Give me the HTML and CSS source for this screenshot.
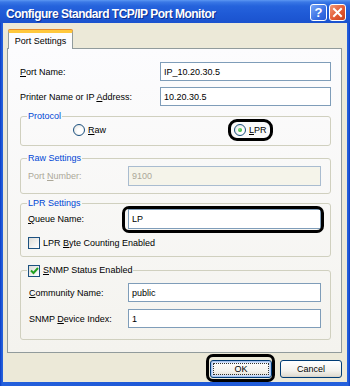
FILE: index.html
```html
<!DOCTYPE html>
<html>
<head>
<meta charset="utf-8">
<link rel="stylesheet" href="styles.css">
</head>
<body>
<div class="window">
  <div class="titlebar">
    <span class="title">Configure Standard TCP/IP Port Monitor</span>
    <div class="tb-buttons">
      <span class="tbtn help">?</span>
      <span class="tbtn close"><svg width="11" height="11" viewBox="0 0 11 11"><path d="M2 2 L9 9 M9 2 L2 9" stroke="#fff" stroke-width="2" stroke-linecap="square"/></svg></span>
    </div>
  </div>
  <div class="client">
    <div class="tabs"><div class="tab">Port Settings</div></div>
    <div class="panel">
      <div class="row"><span class="lbl lbl-top"><u>P</u>ort Name:</span><span class="input wide">IP_10.20.30.5</span></div>
      <div class="row row2"><span class="lbl lbl-top">Printer Name or IP <u>A</u>ddress:</span><span class="input wide">10.20.30.5</span></div>

      <fieldset class="group g-protocol">
        <legend>Protocol</legend>
        <div class="radios">
          <span class="radio raw"><span class="rb"></span><span><u>R</u>aw</span></span>
          <span class="radio lpr mark"><span class="rb on"></span><span><u>L</u>PR</span></span>
        </div>
      </fieldset>

      <fieldset class="group g-raw">
        <legend>Raw Settings</legend>
        <div class="frow first-raw"><span class="lbl disabled">Port <u>N</u>umber:</span><span class="input field dis">9100</span></div>
      </fieldset>

      <fieldset class="group g-lpr">
        <legend>LPR Settings</legend>
        <div class="frow"><span class="lbl"><u>Q</u>ueue Name:</span><span class="input field mark-q">LP</span></div>
        <div class="frow chkrow"><span class="cb"></span><span>LPR <u>B</u>yte Counting Enabled</span></div>
      </fieldset>

      <fieldset class="group g-snmp">
        <legend class="cb-legend"><span class="cb checked"><svg width="9" height="9" viewBox="0 0 9 9"><path d="M1 4.5 L3.5 7 L8 2" fill="none" stroke="#21A121" stroke-width="2"/></svg></span><span><u>S</u>NMP Status Enabled</span></legend>
        <div class="frow srow s1"><span class="lbl lbl-s"><u>C</u>ommunity Name:</span><span class="input field">public</span></div>
        <div class="frow srow s2"><span class="lbl lbl-s">SNMP <u>D</u>evice Index:</span><span class="input field">1</span></div>
      </fieldset>
    </div>
    <div class="buttons">
      <span class="btn default mark-ok"><span class="focus">OK</span></span>
      <span class="btn">Cancel</span>
    </div>
  </div>
</div>
</body>
</html>
```

FILE: styles.css
```css
* { box-sizing: border-box; }
html, body { margin: 0; padding: 0; }
body {
  width: 350px;
  height: 386px;
  overflow: hidden;
  font-family: "Liberation Sans", Arial, sans-serif;
  font-size: 9px;
  color: #000;
  background: #1A4FD0;
}
u { text-decoration: underline; text-underline-offset: 1px; }

.window {
  width: 350px;
  height: 386px;
  display: flex;
  flex-direction: column;
  background: linear-gradient(90deg, #0B3CC4 0, #2460DC 2px, #1E58D6 50%, #2460DC calc(100% - 2px), #0B3CC4 100%);
}
.titlebar {
  height: 23px;
  flex: none;
  display: flex;
  justify-content: space-between;
  align-items: flex-start;
  padding: 0 4px 0 6px;
  background: linear-gradient(#5C97F2 0, #3A78E6 2px, #2563DC 6px, #1F5AD6 60%, #1A52CE 100%);
}
.title {
  margin-top: 8px;
  color: #fff;
  font-weight: bold;
  font-size: 12px;
  line-height: 12px;
  letter-spacing: -0.5px;
  text-shadow: 1px 1px 0 #0A2C8E;
}
.tb-buttons { display: flex; gap: 2px; margin-top: 4px; }
.tbtn {
  width: 17px;
  height: 17px;
  border: 1px solid #fff;
  border-radius: 3px;
  display: flex;
  align-items: center;
  justify-content: center;
}
.help {
  background: linear-gradient(135deg, #7AA8F8, #3A70E4 60%, #2558D6);
  color: #fff;
  font-weight: bold;
  font-size: 13px;
  line-height: 13px;
}
.close { background: linear-gradient(135deg, #F39878, #E25A34 55%, #C8401C); }

.client {
  flex: 1;
  margin: 0 3px 4px 3px;
  background: #ECE9D8;
  padding: 7px 5px 0 4px;
  display: flex;
  flex-direction: column;
}
.tabs { display: flex; padding-left: 1px; position: relative; z-index: 1; }
.tab {
  width: 65px;
  height: 19px;
  margin-bottom: -1px;
  border: 1px solid #919B9C;
  border-bottom: none;
  border-top: 3px solid #FFC83C;
  border-radius: 2px 2px 0 0;
  background: #FCFCFE;
  box-shadow: 0 -1px 0 #E68B2C;
  display: flex;
  align-items: center;
  justify-content: center;
  padding-bottom: 1px;
}
.panel {
  height: 305px;
  border: 1px solid #919B9C;
  background: linear-gradient(#FCFCFE, #F4F3EE);
  padding: 13px 10px 0 12px;
  display: flex;
  flex-direction: column;
}
.row { display: flex; align-items: center; height: 19px; }
.row2 { margin-top: 6px; }
.lbl-top { width: 140px; }
.input {
  height: 19px;
  border: 1px solid #7F9DB9;
  background: #fff;
  padding: 0 3px;
  display: flex;
  align-items: center;
  white-space: nowrap;
}
.wide { flex: 1; }

.group {
  margin: 0;
  padding: 0;
  min-width: 0;
  border: 1px solid #D0D0BF;
  border-radius: 3px;
}
legend {
  padding: 0 1px;
  margin-left: 6px;
  height: 11px;
  line-height: 11px;
  color: #0046D5;
  font-size: 9px;
}
.group.g-protocol { margin-top: 5px; height: 35px; }
.group.g-raw { margin-top: 7px; height: 41px; }
.group.g-lpr { margin-top: 4px; height: 59px; }
.group.g-snmp { margin-top: 7px; height: 76px; }

.radios { display: flex; margin-top: 1px; height: 13px; align-items: center; }
.radio { display: flex; align-items: center; gap: 3px; }
.raw { margin-left: 52px; width: 161px; }
.rb {
  width: 12px;
  height: 12px;
  border-radius: 50%;
  border: 1px solid #1C5180;
  background: radial-gradient(circle at 60% 60%, #FFFFFF 30%, #DCDCD7 100%);
  display: flex;
  align-items: center;
  justify-content: center;
}
.rb.on::before {
  content: "";
  width: 4px;
  height: 4px;
  border-radius: 50%;
  background: radial-gradient(circle at 35% 35%, #7FE07F, #21A121);
}

.frow { display: flex; align-items: center; padding-left: 7px; }
.frow .lbl { width: 100px; }
.field { width: 193px; height: 20px; }
.first-raw { margin-top: 2px; }
.disabled { color: #ACA899; }
.dis { background: #F5F4EA; border-color: #A9BCD0; color: #ACA899; }
.chkrow { margin-top: 7px; height: 13px; gap: 3px; }
.cb {
  width: 12px;
  height: 12px;
  border: 1px solid #1C5180;
  background: linear-gradient(135deg, #DCDCD7, #FFFFFF);
  display: flex;
  align-items: center;
  justify-content: center;
}
.cb-legend {
  height: 13px;
  line-height: 13px;
  display: flex;
  align-items: center;
  gap: 3px;
  color: #000;
}
.srow .lbl-s { width: 99px; }
.srow { padding-left: 8px; }
.srow .field { height: 19px; }
.s1 { margin-top: 6px; }
.s2 { margin-top: 7px; }

.buttons { display: flex; justify-content: flex-end; gap: 8px; margin-top: 7px; }
.btn {
  width: 62px;
  height: 18px;
  border: 1px solid #003C74;
  border-radius: 3px;
  background: linear-gradient(#FFFFFF, #F4F3EE 60%, #E3E0D6 90%, #D6D0C5);
  display: flex;
  align-items: center;
  justify-content: center;
}
.btn.default { box-shadow: inset 0 0 0 1px #AAC4F0, inset 0 0 0 2px #CEE0FA; padding: 2px; }
.focus {
  flex: 1;
  align-self: stretch;
  border: 1px dotted #333;
  display: flex;
  align-items: center;
  justify-content: center;
}

.mark, .mark-q, .mark-ok { position: relative; }
.mark::after, .mark-q::after, .mark-ok::after {
  content: "";
  position: absolute;
  border: 3px solid #000;
  pointer-events: none;
}
.mark::after { left: -6px; right: -6px; top: -5px; bottom: -5px; border-radius: 9px; }
.mark-q::after { left: -7px; right: -4px; top: -4px; bottom: -5px; border-radius: 7px; }
.mark-ok::after { left: -5px; right: -4px; top: -7px; bottom: -5px; border-radius: 7px; }
```
